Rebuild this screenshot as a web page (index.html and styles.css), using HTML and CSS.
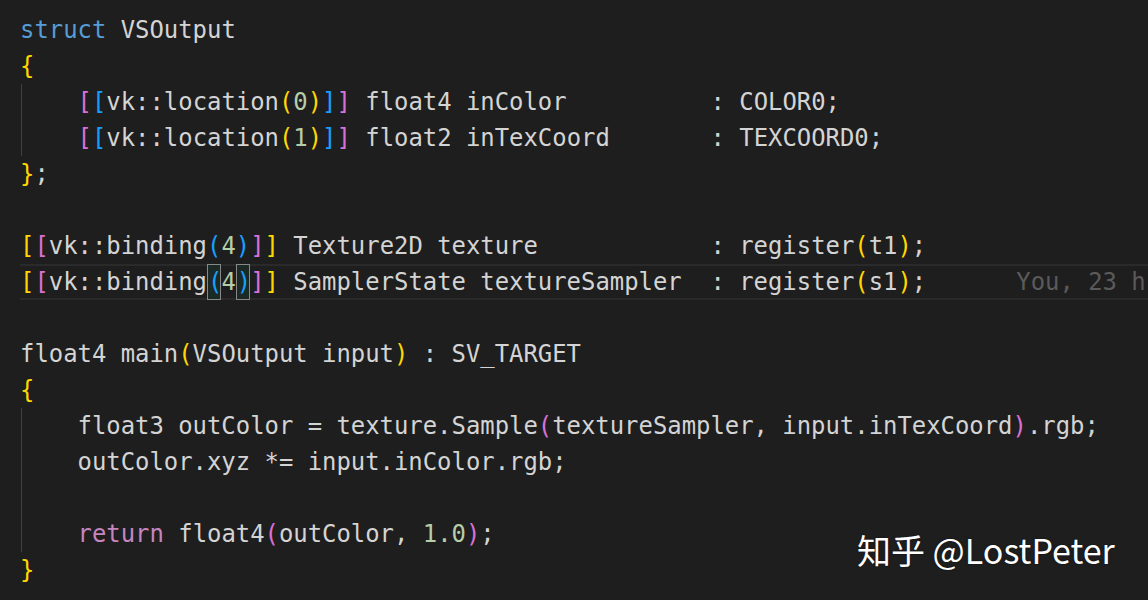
FILE: index.html
```html
<!DOCTYPE html>
<html lang="zh">
<head>
<meta charset="utf-8">
<title>VSOutput shader</title>
<link rel="stylesheet" href="styles.css">
</head>
<body>
<div class="editor">
  <div class="line"><span class="kw">struct</span> VSOutput</div>
  <div class="line"><span class="b1">{</span></div>
  <div class="guide">
    <div class="line">    <span class="b2">[</span><span class="b3">[</span>vk::location<span class="b1">(</span><span class="num">0</span><span class="b1">)</span><span class="b3">]</span><span class="b2">]</span> float4 inColor          : COLOR0;</div>
    <div class="line">    <span class="b2">[</span><span class="b3">[</span>vk::location<span class="b1">(</span><span class="num">1</span><span class="b1">)</span><span class="b3">]</span><span class="b2">]</span> float2 inTexCoord       : TEXCOORD0;</div>
  </div>
  <div class="line"><span class="b1">}</span>;</div>
  <div class="line"> </div>
  <div class="line"><span class="b1">[</span><span class="b2">[</span>vk::binding<span class="b3">(</span><span class="num">4</span><span class="b3">)</span><span class="b2">]</span><span class="b1">]</span> Texture2D texture            : register<span class="b1">(</span>t1<span class="b1">)</span>;</div>
  <div class="line current"><span class="b1">[</span><span class="b2">[</span>vk::binding<span class="b3 match">(</span><span class="num">4</span><span class="b3 match">)</span><span class="b2">]</span><span class="b1">]</span> SamplerState textureSampler  : register<span class="b1">(</span>s1<span class="b1">)</span>;<span class="blame">You, 23 h</span></div>
  <div class="line"> </div>
  <div class="line">float4 main<span class="b1">(</span>VSOutput input<span class="b1">)</span> : SV_TARGET</div>
  <div class="line"><span class="b1">{</span></div>
  <div class="guide">
    <div class="line">    float3 outColor = texture.Sample<span class="b2">(</span>textureSampler, input.inTexCoord<span class="b2">)</span>.rgb;</div>
    <div class="line">    outColor.xyz *= input.inColor.rgb;</div>
    <div class="line"> </div>
    <div class="line">    <span class="kw2">return</span> float4<span class="b2">(</span>outColor, <span class="num">1.0</span><span class="b2">)</span>;</div>
  </div>
  <div class="line"><span class="b1">}</span></div>
</div>
<div class="watermark">知乎 @LostPeter</div>
</body>
</html>
```
FILE: styles.css
```css
html, body {
  margin: 0;
  padding: 0;
  background: #1e1e1e;
  height: 100%;
  overflow: hidden;
}

.editor {
  padding: 12px 0 0 20px;
  font-family: "DejaVu Sans Mono", "Liberation Mono", monospace;
  font-size: 23.9px;
  line-height: 36px;
  color: #d4d4d4;
}

.line {
  height: 36px;
  white-space: pre;
  overflow: hidden;
}

.guide {
  background: linear-gradient(#404040, #404040) no-repeat 1px 0 / 1px 100%;
}

.current {
  box-shadow: inset 0 2px #2a2a2a, inset 0 -2px #2a2a2a;
}

.kw { color: #569cd6; }
.kw2 { color: #c586c0; }
.num { color: #b5cea8; }
.b1 { color: #ffd700; }
.b2 { color: #da70d6; }
.b3 { color: #179fff; }

.match {
  display: inline-block;
  vertical-align: top;
  box-sizing: border-box;
  width: 14.4px;
  height: 36px;
  line-height: 34px;
  border: 1px solid #888888;
  background: #1b2a25;
}

.blame {
  color: #5a5a5a;
  margin-left: 90px;
}

.watermark {
  position: absolute;
  left: 857px;
  top: 527px;
  font-family: "Noto Sans CJK SC", "Noto Sans", sans-serif;
  font-size: 34px;
  line-height: 46px;
  color: #ffffff;
  text-shadow: 0 0 2px rgba(0, 0, 0, 0.6);
}
```
